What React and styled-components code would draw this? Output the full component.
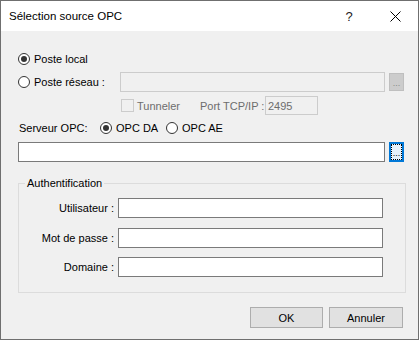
import React from "react";
import styled, { createGlobalStyle, css } from "styled-components";

const GlobalStyle = createGlobalStyle`
  html, body {
    margin: 0;
    padding: 0;
    background: #ffffff;
  }
  * {
    box-sizing: border-box;
  }
`;

const Window = styled.div`
  width: 419px;
  height: 340px;
  border: 1px solid #6f6f6f;
  display: flex;
  flex-direction: column;
  font-family: "Liberation Sans", Arial, sans-serif;
  font-size: 11px;
  color: #000;
  background: #f0f0f0;
`;

const TitleBar = styled.div`
  height: 30px;
  background: #ffffff;
  display: flex;
  align-items: center;
  padding-left: 8px;
`;

const Title = styled.div`
  flex: 1;
  font-size: 11.5px;
`;

const TitleButton = styled.div`
  width: 46px;
  height: 30px;
  display: flex;
  align-items: center;
  justify-content: center;
  font-size: 13px;
  color: #222;
`;

const Body = styled.div`
  flex: 1;
  padding: 19px 0 0 17px;
  display: flex;
  flex-direction: column;
`;

const Row = styled.div`
  display: flex;
  align-items: center;
  height: ${(p) => p.$h || 18}px;
  margin-top: ${(p) => p.$mt || 0}px;
`;

const RadioWrap = styled.label`
  display: flex;
  align-items: center;
  gap: 4px;
  width: ${(p) => (p.$w ? `${p.$w}px` : "auto")};
  white-space: nowrap;
`;

const RadioDot = styled.span`
  width: 12px;
  height: 12px;
  border-radius: 50%;
  border: 1px solid #333;
  background: #fff;
  display: flex;
  align-items: center;
  justify-content: center;
  flex-shrink: 0;
  ${(p) =>
    p.$checked &&
    css`
      &::after {
        content: "";
        width: 6px;
        height: 6px;
        border-radius: 50%;
        background: #333;
      }
    `}
`;

const Radio = ({ checked, children, w }) => (
  <RadioWrap $w={w}>
    <RadioDot $checked={checked} />
    {children}
  </RadioWrap>
);

const TextBox = styled.div`
  width: ${(p) => p.$w}px;
  height: ${(p) => p.$h || 20}px;
  margin-left: ${(p) => p.$ml || 0}px;
  border: 1px solid ${(p) => (p.$disabled ? "#cccccc" : "#7a7a7a")};
  background: ${(p) => (p.$disabled ? "#f0f0f0" : "#ffffff")};
  color: #6d6d6d;
  display: flex;
  align-items: center;
  padding-left: 2px;
`;

const DotsButton = styled.div`
  width: 15px;
  height: ${(p) => p.$h || 18}px;
  margin-left: 4px;
  display: flex;
  align-items: flex-end;
  justify-content: center;
  font-size: 9px;
  line-height: 14px;
  ${(p) =>
    p.$disabled
      ? css`
          background: #cccccc;
          border: 1px solid #bfbfbf;
          color: #8a8a8a;
        `
      : css`
          background: #e5f1fb;
          border: 2px solid #0078d7;
          color: #000;
          outline: 1px dotted #000;
          outline-offset: -3px;
        `}
`;

const Check = styled.span`
  width: 13px;
  height: 13px;
  border: 1px solid #cccccc;
  background: #f0f0f0;
  margin-left: 103px;
  flex-shrink: 0;
`;

const Muted = styled.span`
  color: #6d6d6d;
  margin-left: ${(p) => p.$ml || 0}px;
  width: ${(p) => (p.$w ? `${p.$w}px` : "auto")};
  white-space: nowrap;
`;

const Label = styled.span`
  margin-left: ${(p) => p.$ml || 0}px;
  width: ${(p) => (p.$w ? `${p.$w}px` : "auto")};
  white-space: nowrap;
`;

const Group = styled.fieldset`
  margin: 14px 0 0 0;
  width: 388px;
  height: 117px;
  border: 1px solid #dcdcdc;
  padding: 0;
  display: flex;
  flex-direction: column;
`;

const Legend = styled.legend`
  margin-left: 6px;
  padding: 0 2px;
  line-height: 14px;
`;

const FieldRow = styled.div`
  display: flex;
  align-items: center;
  height: 20px;
  margin-top: ${(p) => p.$mt}px;
`;

const FieldLabel = styled.span`
  width: 95px;
  text-align: right;
  margin-right: 4px;
  white-space: nowrap;
`;

const Footer = styled.div`
  display: flex;
  justify-content: flex-end;
  gap: 6px;
  margin-top: 14px;
  padding-right: 15px;
`;

const Button = styled.div`
  width: ${(p) => p.$w}px;
  height: 21px;
  background: #e1e1e1;
  border: 1px solid #adadad;
  display: flex;
  align-items: center;
  justify-content: center;
`;

export default function App() {
  return (
    <>
      <GlobalStyle />
      <Window>
        <TitleBar>
          <Title>Sélection source OPC</Title>
          <TitleButton>?</TitleButton>
          <TitleButton>
            <svg width="11" height="11" viewBox="0 0 11 11">
              <path d="M0.5 0.5 L10.5 10.5 M10.5 0.5 L0.5 10.5" stroke="#000" strokeWidth="1" />
            </svg>
          </TitleButton>
        </TitleBar>
        <Body>
          <Row $h={18}>
            <Radio checked>Poste local</Radio>
          </Row>
          <Row $h={20} $mt={4}>
            <Radio w={102}>Poste réseau :</Radio>
            <TextBox $w={265} $disabled />
            <DotsButton $disabled>...</DotsButton>
          </Row>
          <Row $h={19} $mt={4}>
            <Check />
            <Muted $ml={3} $w={63}>
              Tunneler
            </Muted>
            <Muted $w={65}>Port TCP/IP :</Muted>
            <TextBox $w={53} $h={19} $disabled>
              2495
            </TextBox>
          </Row>
          <Row $h={18} $mt={4}>
            <Label $ml={1} $w={81}>
              Serveur OPC:
            </Label>
            <Radio w={66} checked>
              OPC DA
            </Radio>
            <Radio>OPC AE</Radio>
          </Row>
          <Row $h={20} $mt={5}>
            <TextBox $w={367} />
            <DotsButton $h={20}>...</DotsButton>
          </Row>
          <Group>
            <Legend>Authentification</Legend>
            <FieldRow $mt={8}>
              <FieldLabel>Utilisateur :</FieldLabel>
              <TextBox $w={265} />
            </FieldRow>
            <FieldRow $mt={10}>
              <FieldLabel>Mot de passe :</FieldLabel>
              <TextBox $w={265} />
            </FieldRow>
            <FieldRow $mt={9}>
              <FieldLabel>Domaine :</FieldLabel>
              <TextBox $w={265} />
            </FieldRow>
          </Group>
          <Footer>
            <Button $w={73}>OK</Button>
            <Button $w={74}>Annuler</Button>
          </Footer>
        </Body>
      </Window>
    </>
  );
}
